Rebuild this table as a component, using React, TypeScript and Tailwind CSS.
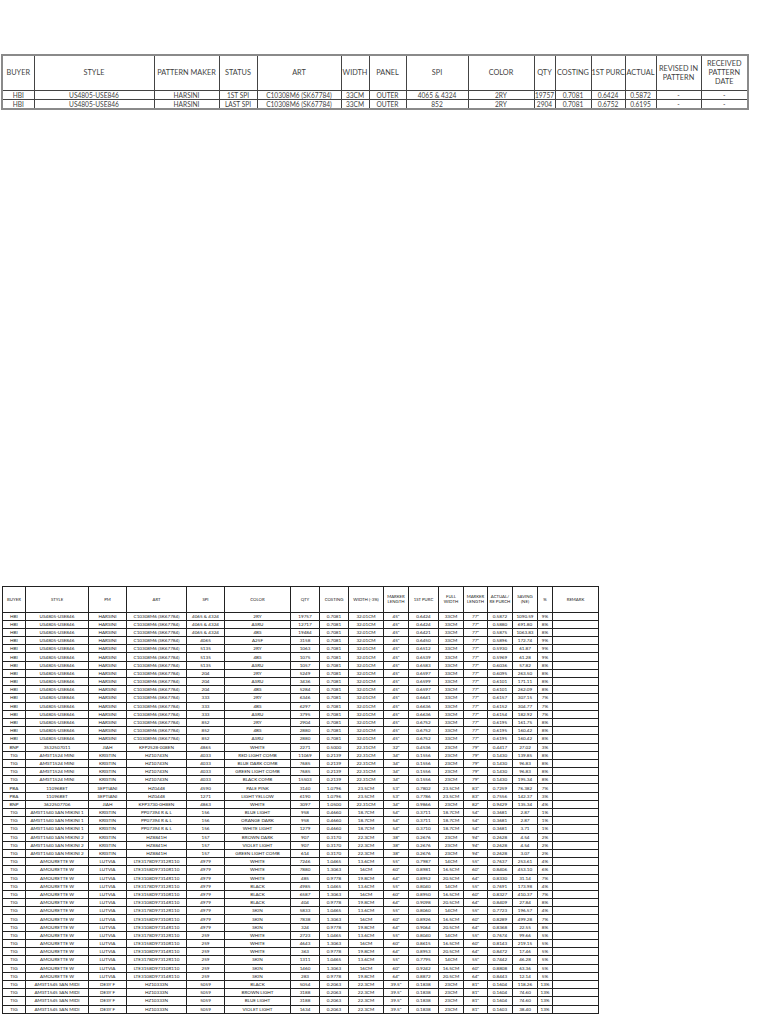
const FONT = { fontFamily: "Lato, 'Open Sans', sans-serif" };

const TOP_COLS = [32, 120, 65, 38, 84, 28, 37, 62, 66, 21, 36, 34, 31, 45, 47];
const TOP_HEAD = [
  "BUYER", "STYLE", "PATTERN MAKER", "STATUS", "ART", "WIDTH", "PANEL", "SPI", "COLOR",
  "QTY", "COSTING", "1ST PURC", "ACTUAL", "REVISED IN PATTERN", "RECEIVED PATTERN DATE",
];
const TOP_ROWS = [
  ["HBI", "US4805-USE846", "HARSINI", "1ST SPI", "C10308M6 (SK67784)", "33CM", "OUTER", "4065 & 4324", "2RY", "19757", "0.7081", "0.6424", "0.5872", "-", "-"],
  ["HBI", "US4805-USE846", "HARSINI", "LAST SPI", "C10308M6 (SK67784)", "33CM", "OUTER", "852", "2RY", "2904", "0.7081", "0.6752", "0.6195", "-", "-"],
];

const BOT_COLS = [23, 63, 38, 60, 38, 66, 29, 29, 35, 25, 30, 25, 24, 25, 25, 15, 46];
const BOT_HEAD = [
  "BUYER", "STYLE", "PM", "ART", "SPI", "COLOR", "QTY", "COSTING", "WIDTH (-3%)", "MARKER LENGTH",
  "1ST PURC", "FULL WIDTH", "MARKER LENGTH", "ACTUAL/ RE PURCH", "SAVING (NE)", "%", "REMARK",
];

const HBI = ["HBI", "US4805-USE846", "HARSINI", "C10308M6 (SK67784)"];
const hbi = (spi: string, color: string, qty: string, purc: string, actual: string, saving: string, pct: string) =>
  [...HBI, spi, color, qty, "0.7081", "32.01CM", '45"', purc, "33CM", '77"', actual, saving, pct, ""];

const MINI = ["TIG", "AMST1524 MINI", "KRISTIN", "HZ10743N", "4033"];
const mini = (color: string, qty: string, saving: string) =>
  [...MINI, color, qty, "0.2139", "22.31CM", '34"', "0.1556", "23CM", '79"', "0.1430", saving, "8%", ""];

const A = ["TIG", "AMOURETTE W", "LUTVIA"];
const am = (art: string, spi: string, color: string, qty: string, purc: string, actual: string, saving: string, pct: string) => {
  const size =
    art.startsWith("LTE3178") ? ["1.0465", "13.6CM", '55"', "14CM", '55"']
    : art.startsWith("LTE3158") ? ["1.3063", "16CM", '60"', "16.5CM", '60"']
    : ["0.9778", "19.8CM", '64"', "20.5CM", '64"'];
  return [...A, art, spi, color, qty, size[0], size[1], size[2], purc, size[3], size[4], actual, saving, pct, ""];
};
const L1 = "LTE3178D97312R110";
const L2 = "LTE3158D97310R110";
const L3 = "LTE3108D97314R110";

const MIDI = ["TIG", "AMST1545 SAN MIDI", "DESY F", "HZ10333N", "5059"];
const midi = (color: string, qty: string, actual: string, saving: string) =>
  [...MIDI, color, qty, "0.2063", "22.3CM", '39.5"', "0.1838", "23CM", '81"', actual, saving, "13%", ""];

const BOT_ROWS: string[][] = [
  hbi("4065 & 4324", "2RY", "19757", "0.6424", "0.5872", "1090.59", "9%"),
  hbi("4065 & 4324", "ASRU", "12717", "0.6424", "0.5880", "691.80", "8%"),
  hbi("4065 & 4324", "4BS", "19484", "0.6421", "0.5875", "1063.83", "8%"),
  hbi("4065", "A25F", "3158", "0.6450", "0.5896", "172.74", "9%"),
  hbi("5135", "2RY", "1063", "0.6512", "0.5930", "61.87", "9%"),
  hbi("5135", "4BS", "1075", "0.6539", "0.5969", "61.28", "9%"),
  hbi("5135", "ASRU", "1057", "0.6583", "0.6036", "57.82", "8%"),
  hbi("204", "2RY", "5249", "0.6597", "0.6095", "263.50", "8%"),
  hbi("204", "ASRU", "3436", "0.6599", "0.6101", "171.11", "8%"),
  hbi("204", "4BS", "5284", "0.6597", "0.6101", "262.09", "8%"),
  hbi("333", "2RY", "6346", "0.6641", "0.6157", "307.15", "7%"),
  hbi("333", "4BS", "6297", "0.6636", "0.6152", "304.77", "7%"),
  hbi("333", "ASRU", "3795", "0.6636", "0.6154", "182.92", "7%"),
  hbi("852", "2RY", "2904", "0.6752", "0.6195", "161.75", "8%"),
  hbi("852", "4BS", "2880", "0.6752", "0.6195", "160.42", "8%"),
  hbi("852", "ASRU", "2880", "0.6752", "0.6195", "160.42", "8%"),
  ["BNP", "3532507011", "JIAH", "KFP2528-008EN", "4865", "WHITE", "2271", "0.5000", "22.31CM", '32"', "0.4536", "23CM", '79"', "0.4417", "27.02", "3%", ""],
  mini("RED LIGHT COMB", "11069", "139.85"),
  mini("BLUE DARK COMB", "7685", "96.83"),
  mini("GREEN LIGHT COMB", "7685", "96.83"),
  mini("BLACK COMB", "15503", "195.34"),
  ["PBA", "11096BET", "SEPTIANI", "HZ0448", "4590", "PALE PINK", "3140", "1.0796", "23.5CM", '53"', "0.7802", "23.5CM", '83"', "0.7259", "76.382", "7%", ""],
  ["PBA", "11096BET", "SEPTIANI", "HZ0448", "1271", "LIGHT YELLOW", "6190", "1.0796", "23.5CM", '53"', "0.7786", "23.5CM", '83"', "0.7556", "142.37", "3%", ""],
  ["BNP", "3622507706", "JIAH", "KFP3730-0H8EN", "4863", "WHITE", "3097", "1.0500", "22.31CM", '34"', "0.9866", "23CM", '82"', "0.9429", "135.34", "4%", ""],
  ["TIG", "AMST1540 SAN MIKINI 1", "KRISTIN", "PP07394 R & L", "156", "BLUE LIGHT", "958", "0.4660", "18.7CM", '54"', "0.3711", "18.7CM", '54"', "0.3681", "2.87", "1%", ""],
  ["TIG", "AMST1540 SAN MIKINI 1", "KRISTIN", "PP07394 R & L", "156", "ORANGE DARK", "958", "0.4660", "18.7CM", '54"', "0.3711", "18.7CM", '54"', "0.3681", "2.87", "1%", ""],
  ["TIG", "AMST1540 SAN MIKINI 1", "KRISTIN", "PP07394 R & L", "156", "WHITE LIGHT", "1279", "0.4660", "18.7CM", '54"', "0.3710", "18.7CM", '54"', "0.3681", "3.71", "1%", ""],
  ["TIG", "AMST1540 SAN MIKINI 2", "KRISTIN", "HZ8841H", "157", "BROWN DARK", "907", "0.3170", "22.3CM", '38"', "0.2676", "23CM", '94"', "0.2628", "4.54", "2%", ""],
  ["TIG", "AMST1540 SAN MIKINI 2", "KRISTIN", "HZ8841H", "157", "VIOLET LIGHT", "907", "0.3170", "22.3CM", '38"', "0.2676", "23CM", '94"', "0.2628", "4.54", "2%", ""],
  ["TIG", "AMST1540 SAN MIKINI 2", "KRISTIN", "HZ8841H", "157", "GREEN LIGHT COMB", "614", "0.3170", "22.3CM", '38"', "0.2676", "23CM", '94"', "0.2628", "3.07", "2%", ""],
  am(L1, "4979", "WHITE", "7246", "0.7987", "0.7637", "253.61", "4%"),
  am(L2, "4979", "WHITE", "7880", "0.8981", "0.8406", "453.10", "6%"),
  am(L3, "4979", "WHITE", "485", "0.8952", "0.8330", "31.14", "7%"),
  am(L1, "4979", "BLACK", "4985", "0.8040", "0.7691", "173.98", "4%"),
  am(L2, "4979", "BLACK", "6587", "0.8950", "0.8327", "410.37", "7%"),
  am(L3, "4979", "BLACK", "404", "0.9098", "0.8409", "27.84", "8%"),
  am(L1, "4979", "SKIN", "5833", "0.8060", "0.7723", "196.57", "4%"),
  am(L2, "4979", "SKIN", "7838", "0.8926", "0.8289", "499.28", "7%"),
  am(L3, "4979", "SKIN", "324", "0.9064", "0.8368", "22.55", "8%"),
  am(L1, "259", "WHITE", "2723", "0.8040", "0.7674", "99.66", "5%"),
  am(L2, "259", "WHITE", "4643", "0.8615", "0.8143", "219.15", "5%"),
  am(L3, "259", "WHITE", "363", "0.8953", "0.8472", "17.46", "5%"),
  am(L1, "259", "SKIN", "1311", "0.7795", "0.7442", "46.28", "5%"),
  am(L2, "259", "SKIN", "1460", "0.9242", "0.8808", "63.36", "5%"),
  am(L3, "259", "SKIN", "283", "0.8872", "0.8443", "12.14", "5%"),
  midi("BLACK", "5054", "0.1604", "118.26"),
  midi("BROWN LIGHT", "3188", "0.1604", "74.60"),
  midi("BLUE LIGHT", "3188", "0.1604", "74.60"),
  midi("VIOLET LIGHT", "1634", "0.1603", "38.40"),
];

function TopTable() {
  return (
    <table className="table-fixed border-collapse border-2 border-[#8a8a8a] text-[#3f3f3f]" style={{ width: 746 }}>
      <colgroup>
        {TOP_COLS.map((w, i) => <col key={i} style={{ width: w }} />)}
      </colgroup>
      <thead>
        <tr className="h-[35px]">
          {TOP_HEAD.map((h, i) => (
            <th
              key={i}
              className={`border border-[#444] p-0 text-center align-middle text-[7.3px] font-normal leading-[9px] ${i < 13 ? "whitespace-nowrap" : ""}`}
            >
              {h}
            </th>
          ))}
        </tr>
      </thead>
      <tbody>
        {TOP_ROWS.map((row, r) => (
          <tr key={r} className="h-[9px]">
            {row.map((c, i) => (
              <td key={i} className="overflow-hidden whitespace-nowrap border border-[#444] p-0 text-center text-[6.6px] leading-[8px]">
                {c}
              </td>
            ))}
          </tr>
        ))}
      </tbody>
    </table>
  );
}

function BottomTable() {
  return (
    <table className="table-fixed border-collapse border border-[#222] text-[#222]" style={{ width: 596 }}>
      <colgroup>
        {BOT_COLS.map((w, i) => <col key={i} style={{ width: w }} />)}
      </colgroup>
      <thead>
        <tr className="h-[26px]">
          {BOT_HEAD.map((h, i) => (
            <th key={i} className="border border-[#222] p-0 text-center align-middle text-[4.3px] font-normal leading-[5px]">
              {h}
            </th>
          ))}
        </tr>
      </thead>
      <tbody>
        {BOT_ROWS.map((row, r) => (
          <tr key={r} className="h-[8.2px]">
            {row.map((c, i) => (
              <td key={i} className="overflow-hidden whitespace-nowrap border border-[#222] p-0 text-center text-[4.6px] leading-[5px]">
                {c}
              </td>
            ))}
          </tr>
        ))}
      </tbody>
    </table>
  );
}

export default function App() {
  return (
    <div className="min-h-[1024px] w-[768px] bg-white" style={FONT}>
      <div className="pl-[1px] pt-[54px]">
        <TopTable />
      </div>
      <div className="pl-[2px] pt-[476px]">
        <BottomTable />
      </div>
    </div>
  );
}
